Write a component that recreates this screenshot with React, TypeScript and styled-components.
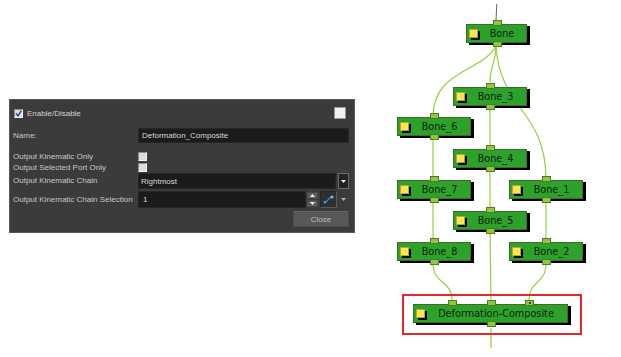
import React from "react";
import styled, { createGlobalStyle } from "styled-components";

const Global = createGlobalStyle`
  html, body { margin: 0; padding: 0; background: #ffffff; }
  body { width: 621px; height: 357px; overflow: hidden; }
`;

const Page = styled.div`
  display: flex;
  width: 621px;
  height: 357px;
  background: #ffffff;
  overflow: hidden;
`;

const DialogArea = styled.div`
  padding: 99px 0 0 9px;
`;

const Panel = styled.div`
  box-sizing: border-box;
  width: 346px;
  height: 134px;
  background: #3b3b3b;
  border: 1px solid #585858;
  padding: 7px 5px 0 3px;
  display: flex;
  flex-direction: column;
  font-family: "Liberation Sans", Arial, sans-serif;
  font-size: 8px;
  color: #c8c8c8;
`;

const Row = styled.div<{ $h: number; $mt?: number; $end?: boolean }>`
  display: flex;
  align-items: center;
  height: ${(p) => p.$h}px;
  margin-top: ${(p) => p.$mt ?? 0}px;
  justify-content: ${(p) => (p.$end ? "flex-end" : "flex-start")};
`;

const Label = styled.div`
  width: 125px;
  flex-shrink: 0;
  white-space: nowrap;
  line-height: 1;
`;

const HeaderLabel = styled.span`
  margin-left: 4px;
  color: #d2d2d2;
`;

const CheckBox = styled.div<{ $ml?: number }>`
  box-sizing: border-box;
  width: 9px;
  height: 9px;
  margin-left: ${(p) => p.$ml ?? 0}px;
  background: #dcdcdc;
  border: 1px solid #8a8a8a;
  border-right-color: #f2f2f2;
  border-bottom-color: #f2f2f2;
  display: flex;
  align-items: center;
  justify-content: center;
  flex-shrink: 0;
`;

const WhiteBox = styled.div`
  box-sizing: border-box;
  width: 12px;
  height: 12px;
  margin-left: auto;
  margin-right: 3px;
  background: #f1f1f1;
  border: 1px solid #9a9a9a;
  border-radius: 1px;
`;

const Field = styled.div<{ $pl?: number }>`
  box-sizing: border-box;
  flex: 1;
  min-width: 0;
  height: 100%;
  background: #1b1b1b;
  border: 1px solid #262626;
  color: #d8d8d8;
  padding-left: ${(p) => p.$pl ?? 3}px;
  display: flex;
  align-items: center;
  white-space: nowrap;
`;

const DropButton = styled.div`
  box-sizing: border-box;
  width: 11px;
  height: 100%;
  margin-left: 2px;
  background: #232323;
  border: 1px solid #6a6a6a;
  display: flex;
  align-items: center;
  justify-content: center;
`;

const Spinner = styled.div`
  width: 11px;
  height: 100%;
  margin-left: 1px;
  display: flex;
  flex-direction: column;
  justify-content: center;
  gap: 1px;
`;

const SpinButton = styled.div`
  box-sizing: border-box;
  height: 7px;
  background: #5c5c5c;
  border: 1px solid #484848;
  display: flex;
  align-items: center;
  justify-content: center;
`;

const IconButton = styled.div`
  box-sizing: border-box;
  width: 17px;
  height: 17px;
  margin-left: 2px;
  background: #2f2f2f;
  border: 1px solid #262626;
  border-right-color: #5a5a5a;
  border-bottom-color: #5a5a5a;
  display: flex;
  align-items: center;
  justify-content: center;
`;

const MenuArrow = styled.div`
  width: 11px;
  flex-shrink: 0;
  height: 100%;
  display: flex;
  align-items: center;
  justify-content: center;
  padding-left: 1px;
`;

const CloseButton = styled.div`
  box-sizing: border-box;
  width: 56px;
  height: 16px;
  background: #585858;
  border: 1px solid #4a4a4a;
  border-top-color: #646464;
  color: #bcbcbc;
  display: flex;
  align-items: center;
  justify-content: center;
`;

/* ---------- node graph ---------- */

const Graph = styled.div`
  position: relative;
  margin-left: 25px;
  width: 241px;
  height: 357px;
`;

const Wires = styled.svg`
  position: absolute;
  left: 0;
  top: 0;
`;

const NodeBox = styled.div<{ $x: number; $y: number; $w: number }>`
  position: absolute;
  left: ${(p) => p.$x - 380}px;
  top: ${(p) => p.$y}px;
  width: ${(p) => p.$w}px;
  height: 19px;
  box-sizing: border-box;
  background: #2da22a;
  border: 1px solid #42692a;
  box-shadow: 3px 2px 0 #000000;
  display: flex;
  align-items: center;
  padding-left: 2px;
  font-family: "DejaVu Sans", Verdana, sans-serif;
  font-size: 9.7px;
  color: #0d1d0a;
`;

const NodeIcon = styled.div`
  box-sizing: border-box;
  width: 9px;
  height: 9px;
  background: #fde64e;
  border: 1px solid #b8a23a;
  box-shadow: 2px 2px 0 #000000;
  flex-shrink: 0;
`;

const NodeName = styled.div`
  flex: 1;
  text-align: center;
  white-space: nowrap;
  line-height: 1;
`;

const Port = styled.div<{ $left: number; $bottom?: boolean }>`
  position: absolute;
  left: ${(p) => p.$left}px;
  ${(p) => (p.$bottom ? "bottom: -5px;" : "top: -5px;")}
  width: 9px;
  height: 6px;
  margin-left: -5px;
  box-sizing: border-box;
  background: #8ec83e;
  border: 1px solid #4f7b24;
  display: flex;
  align-items: center;
  justify-content: center;
`;

const PortDot = styled.div`
  width: 2px;
  height: 2px;
  background: #2b4a14;
`;

const Selection = styled.div`
  position: absolute;
  left: 22px;
  top: 294px;
  width: 180px;
  height: 41px;
  box-sizing: border-box;
  border: 2px solid #e5262b;
`;

type NodeProps = {
  name: string;
  x: number;
  y: number;
  w: number;
  inPorts?: number[];
  dotPort?: number;
};

function GraphNode({ name, x, y, w, inPorts, dotPort }: NodeProps) {
  const center = Math.round(w / 2);
  const ins = inPorts ?? [center];
  return (
    <NodeBox $x={x} $y={y} $w={w}>
      {ins.map((px, i) => (
        <Port key={i} $left={px}>
          {dotPort === i ? <PortDot /> : null}
        </Port>
      ))}
      <NodeIcon />
      <NodeName>{name}</NodeName>
      <Port $left={center} $bottom />
    </NodeBox>
  );
}

const nodes: NodeProps[] = [
  { name: "Bone", x: 466, y: 24, w: 61 },
  { name: "Bone_3", x: 453, y: 87, w: 74 },
  { name: "Bone_6", x: 397, y: 117, w: 74 },
  { name: "Bone_4", x: 453, y: 149, w: 74 },
  { name: "Bone_7", x: 397, y: 180, w: 74 },
  { name: "Bone_1", x: 509, y: 180, w: 74 },
  { name: "Bone_5", x: 453, y: 211, w: 74 },
  { name: "Bone_8", x: 397, y: 242, w: 74 },
  { name: "Bone_2", x: 509, y: 242, w: 74 },
  { name: "Deformation-Composite", x: 413, y: 304, w: 155, inPorts: [39, 78, 116], dotPort: 2 },
];

const wires = [
  "M496,46 C496,64 490,64 490,82",
  "M496,46 C482,72 433,70 433,117",
  "M496,46 C500,110 546,110 546,180",
  "M490,107 L490,149",
  "M490,169 L490,211",
  "M490,231 L491,300",
  "M433,137 L433,180",
  "M433,200 L433,242",
  "M546,200 L546,242",
  "M433,263 C433,285 452,280 452,300",
  "M546,263 C546,285 529,280 529,300",
  "M491,328 L491,348",
];

const Tri = ({ up, color = "#f0f0f0" }: { up?: boolean; color?: string }) => (
  <svg width="5" height="3" viewBox="0 0 5 3">
    <path d={up ? "M0,3 L2.5,0 L5,3 Z" : "M0,0 L5,0 L2.5,3 Z"} fill={color} />
  </svg>
);

export default function App() {
  return (
    <>
      <Global />
      <Page>
        <DialogArea>
          <Panel>
            <Row $h={12}>
              <CheckBox $ml={1}>
                <svg width="7" height="7" viewBox="0 0 7 7">
                  <path d="M1,3.5 L3,5.8 L6.3,0.6" stroke="#24408f" strokeWidth="1.4" fill="none" />
                </svg>
              </CheckBox>
              <HeaderLabel>Enable/Disable</HeaderLabel>
              <WhiteBox />
            </Row>
            <Row $h={15} $mt={9}>
              <Label>Name:</Label>
              <Field>Deformation_Composite</Field>
            </Row>
            <Row $h={9} $mt={9}>
              <Label>Output Kinematic Only</Label>
              <CheckBox />
            </Row>
            <Row $h={9} $mt={2}>
              <Label>Output Selected Port Only</Label>
              <CheckBox />
            </Row>
            <Row $h={16} $mt={1}>
              <Label>Output Kinematic Chain</Label>
              <Field $pl={2}>Rightmost</Field>
              <DropButton>
                <Tri />
              </DropButton>
            </Row>
            <Row $h={17} $mt={2}>
              <Label>Output Kinematic Chain Selection</Label>
              <Field $pl={4}>1</Field>
              <Spinner>
                <SpinButton>
                  <Tri up />
                </SpinButton>
                <SpinButton>
                  <Tri />
                </SpinButton>
              </Spinner>
              <IconButton>
                <svg width="11" height="9" viewBox="0 0 11 9">
                  <path d="M1.5,7.5 C5,7.5 5,2 9,2" stroke="#3d8fe0" strokeWidth="1.2" fill="none" />
                  <circle cx="1.8" cy="7.3" r="1.2" fill="#4aa0f0" />
                  <circle cx="9" cy="2" r="1.6" fill="#6ab8ff" />
                </svg>
              </IconButton>
              <MenuArrow>
                <Tri color="#b0b0b0" />
              </MenuArrow>
            </Row>
            <Row $h={16} $mt={3} $end>
              <CloseButton>Close</CloseButton>
            </Row>
          </Panel>
        </DialogArea>
        <Graph>
          <Wires width="241" height="357" viewBox="0 0 241 357">
            <g transform="translate(-380,0)" fill="none">
              <path d="M496.8,4 L496,20" stroke="#5f6e52" strokeWidth="1" />
              {wires.map((d, i) => (
                <path key={i} d={d} stroke="#93d040" strokeWidth="1.2" />
              ))}
            </g>
          </Wires>
          {nodes.map((n) => (
            <GraphNode key={n.name} {...n} />
          ))}
          <Selection />
        </Graph>
      </Page>
    </>
  );
}
